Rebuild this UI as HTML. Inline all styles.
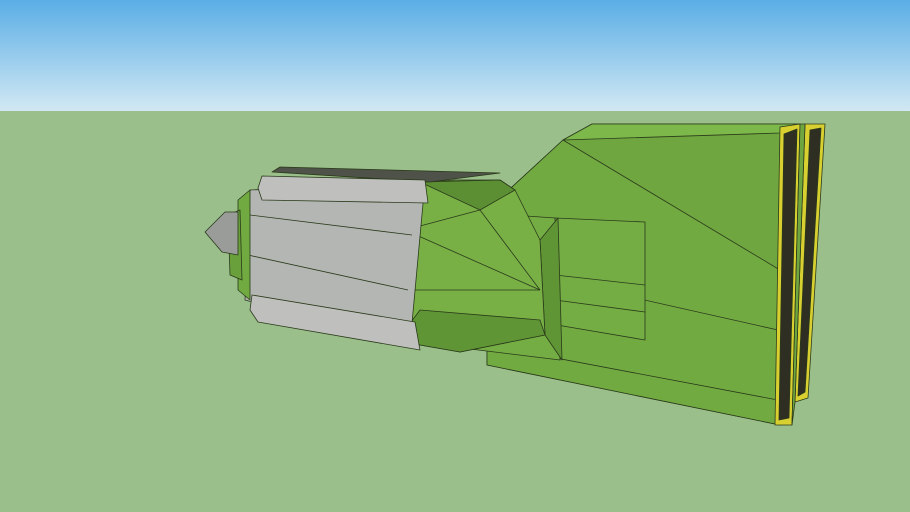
<!DOCTYPE html>
<html><head><style>
html,body{margin:0;padding:0;width:910px;height:512px;overflow:hidden}
</style></head><body>
<svg width="910" height="512" viewBox="0 0 910 512" xmlns="http://www.w3.org/2000/svg">
<defs>
<linearGradient id="sky" x1="0" y1="0" x2="0" y2="1">
<stop offset="0" stop-color="#5aaee6"/><stop offset="1" stop-color="#d2e8f3"/>
</linearGradient>
</defs>
<rect width="910" height="111" fill="url(#sky)"/>
<rect y="111" width="910" height="401" fill="#9bbf8b"/>
<g stroke="#2a3a1a" stroke-width="0.8" stroke-linejoin="round">
<polygon points="487,210 563,140 592,124 800,124 785,128 780,425 487,365" fill="#6fa640"/>
<polygon points="563,140 780,270 780,425 487,365 487,210" fill="#72aa42"/>
<polygon points="563,140 592,124 800,124 780,133" fill="#7db84a"/>
<line x1="487" y1="345" x2="778" y2="400"/>
<line x1="600" y1="290" x2="778" y2="330"/>
<polygon points="780,127 800,124 792,425 775,425" fill="#d8d030"/>
<polygon points="784,134 797,129 789,418 779,420" fill="#2e2e22"/>
<polygon points="805,124 825,124 808,398 795,402" fill="#d8d030"/>
<polygon points="810,130 821,128 805,392 798,396" fill="#2e2e22"/>
<polygon points="800,124 805,124 795,402 792,425" fill="#6fa640"/>
<polygon points="555,218 645,222 645,340 557,325" fill="#74ad44"/>
<line x1="555" y1="275" x2="645" y2="285"/>
<line x1="555" y1="300" x2="645" y2="312"/>
<polygon points="440,210 555,218 560,360 462,348" fill="#74ad44"/>
<polygon points="540,240 558,218 562,360 545,335" fill="#5f9535"/>
<polygon points="405,230 420,182 455,180 500,180 515,190 540,240 545,335 460,352 420,345 405,330" fill="#78b046"/>
<polygon points="420,182 500,180 515,190 480,210" fill="#5c8f33"/>
<polygon points="405,330 420,345 460,352 545,335 540,320 420,310" fill="#5f9535"/>
<line x1="405" y1="230" x2="540" y2="290"/>
<line x1="405" y1="290" x2="540" y2="290"/>
<line x1="480" y1="210" x2="540" y2="290"/>
<line x1="405" y1="230" x2="480" y2="210"/>
<polygon points="272,172 280,167 500,173 430,182" fill="#4e5248"/>
<polygon points="250,190 425,182 410,345 245,300" fill="#b4b6b4"/>
<line x1="250" y1="215" x2="412" y2="235"/>
<line x1="248" y1="255" x2="408" y2="290"/>
<polygon points="262,176 425,180 428,203 262,200 258,188" fill="#bfc0be"/>
<polygon points="252,295 415,322 420,350 258,322 250,310" fill="#bfc0be"/>
<polygon points="238,200 250,190 250,300 238,290" fill="#70aa40"/>
<polygon points="228,215 240,210 242,280 230,275" fill="#6aa03c"/>
<polygon points="205,232 225,212 238,212 238,255 222,252" fill="#9a9c9a"/>
</g>
</svg>
</body></html>
